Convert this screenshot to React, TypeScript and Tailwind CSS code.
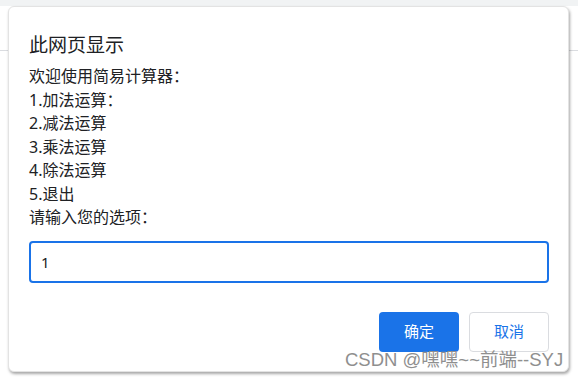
export default function App() {
  const lines = [
    "欢迎使用简易计算器：",
    "1.加法运算：",
    "2.减法运算",
    "3.乘法运算",
    "4.除法运算",
    "5.退出",
    "请输入您的选项：",
  ];

  return (
    <div className="relative w-[578px] h-[382px] overflow-hidden bg-white font-['Noto_Sans','Noto_Sans_CJK_SC',sans-serif]">
      {/* page behind the dialog */}
      <div className="h-[6px] bg-[#f1f3f4]" />
      <div className="h-[45px] border-b border-[#dadce0]" />

      {/* alert dialog */}
      <div className="absolute left-[8px] top-[6px] w-[561px] h-[366px] rounded-[6px] bg-white border border-[#e3e3e3] shadow-[1px_2px_3px_rgba(0,0,0,0.35)] pl-[20px] pr-[19px] pt-[25px] flex flex-col">
        <h1 className="text-[19px] leading-[26px] text-[#202124]">此网页显示</h1>

        <div className="mt-[7px] text-[16px] leading-[23.5px] text-[#202124]">
          {lines.map((l) => (
            <div key={l}>{l}</div>
          ))}
        </div>

        <input
          defaultValue="1"
          className="mt-[11px] h-[42px] w-full rounded-[4px] border-2 border-[#1a73e8] px-[10px] text-[15px] text-[#202124] outline-none"
        />

        <div className="mt-[29px] flex justify-end gap-[10px]">
          <button className="w-[80px] h-[40px] rounded-[4px] bg-[#1a73e8] text-white text-[15px]">
            确定
          </button>
          <button className="w-[80px] h-[40px] rounded-[4px] border border-[#dadce0] bg-white text-[#1a73e8] text-[15px]">
            取消
          </button>
        </div>
      </div>

      {/* watermark */}
      <div className="absolute left-[345px] top-[349px] font-['Liberation_Sans','Noto_Sans_CJK_SC',sans-serif] text-[18.5px] leading-[22px] text-[#8f8f8f] whitespace-nowrap">
        CSDN @嘿嘿~~前端--SYJ
      </div>
    </div>
  );
}
